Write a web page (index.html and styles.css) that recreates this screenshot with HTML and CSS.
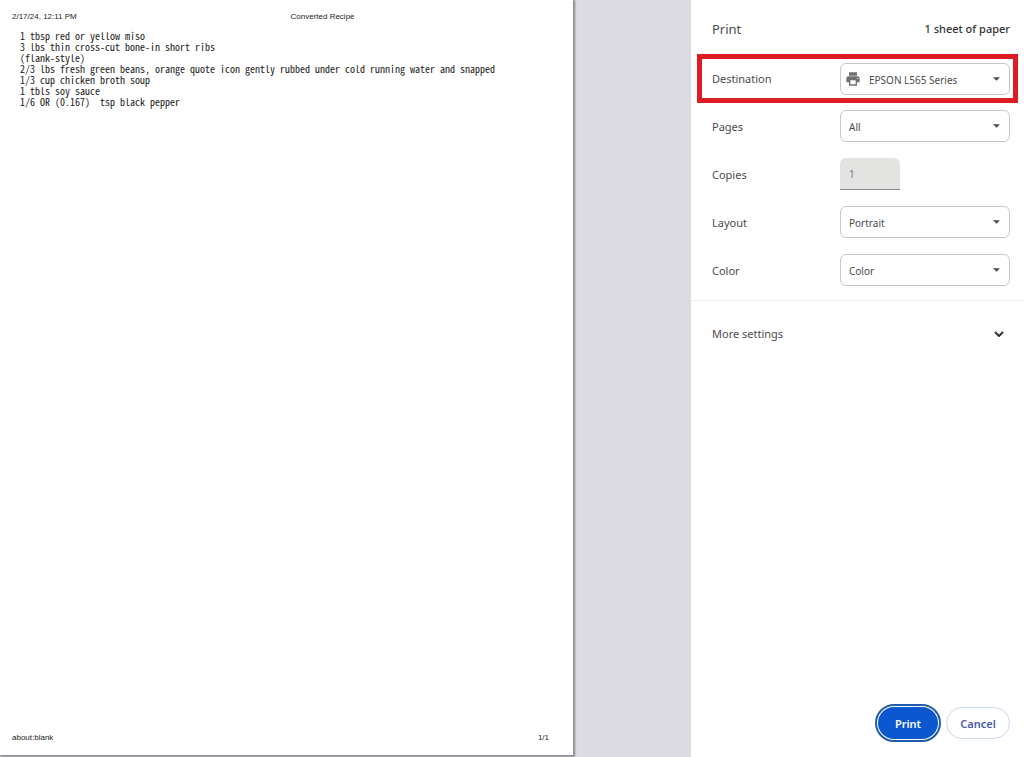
FILE: index.html
```html
<!DOCTYPE html>
<html lang="en">
<head>
<meta charset="utf-8">
<title>Print</title>
<link rel="stylesheet" href="styles.css">
</head>
<body>
<div class="dialog">
  <main class="preview">
    <article class="sheet">
      <header class="sheet-bar">
        <span class="sheet-date">2/17/24, 12:11 PM</span>
        <span class="sheet-title">Converted Recipe</span>
      </header>
      <pre class="recipe">1 tbsp red or yellow miso
3 lbs thin cross-cut bone-in short ribs
(flank-style)
2/3 lbs fresh green beans, orange quote icon gently rubbed under cold running water and snapped
1/3 cup chicken broth soup
1 tbls soy sauce
1/6 OR (0.167)  tsp black pepper</pre>
      <footer class="sheet-bar sheet-foot">
        <span>about:blank</span>
        <span>1/1</span>
      </footer>
    </article>
  </main>
  <form class="panel">
    <header class="panel-head">
      <h1 class="panel-title">Print</h1>
      <span class="sheet-count">1 sheet of paper</span>
    </header>
    <div class="row row-marked">
      <label class="label" for="destination">Destination</label>
      <div class="field">
        <svg class="printer" viewBox="0 0 24 24" aria-hidden="true"><path fill="#6f7073" d="M18 2H6v5h12V2zM19 8H5c-1.660 0-3 1.340-3 3v6h4v5h12v-5h4v-6c0-1.660-1.340-3-3-3zm-3 12H8v-6h8v6zm3-8c-.55 0-1-.45-1-1s.45-1 1-1 1 .45 1 1-.45 1-1 1z"/></svg>
        <select class="select select-icon" id="destination"><option>EPSON L565 Series</option></select>
        <svg class="arrow" viewBox="0 0 8 4" aria-hidden="true"><path fill="#4a4b4e" d="M0 0h8L4 4z"/></svg>
      </div>
    </div>
    <div class="row">
      <label class="label" for="pages">Pages</label>
      <div class="field">
        <select class="select" id="pages"><option>All</option></select>
        <svg class="arrow" viewBox="0 0 8 4" aria-hidden="true"><path fill="#4a4b4e" d="M0 0h8L4 4z"/></svg>
      </div>
    </div>
    <div class="row">
      <label class="label" for="copies">Copies</label>
      <input class="copies" id="copies" type="text" inputmode="numeric" value="1">
    </div>
    <div class="row">
      <label class="label" for="layout">Layout</label>
      <div class="field">
        <select class="select" id="layout"><option>Portrait</option></select>
        <svg class="arrow" viewBox="0 0 8 4" aria-hidden="true"><path fill="#4a4b4e" d="M0 0h8L4 4z"/></svg>
      </div>
    </div>
    <div class="row">
      <label class="label" for="color">Color</label>
      <div class="field">
        <select class="select" id="color"><option>Color</option></select>
        <svg class="arrow" viewBox="0 0 8 4" aria-hidden="true"><path fill="#4a4b4e" d="M0 0h8L4 4z"/></svg>
      </div>
    </div>
    <button class="more" type="button">
      <span>More settings</span>
      <svg class="chevron" viewBox="0 0 10 6" aria-hidden="true"><path fill="none" stroke="#333" stroke-width="2" d="M1 1l4 4 4-4"/></svg>
    </button>
    <footer class="actions">
      <button class="button button-primary" type="submit">Print</button>
      <button class="button" type="button">Cancel</button>
    </footer>
  </form>
</div>
</body>
</html>
```
FILE: styles.css
```css
* {
  box-sizing: border-box;
}

body {
  margin: 0;
  font-family: "Noto Sans", "Open Sans", sans-serif;
  font-size: 11px;
  color: #4b4b4e;
}

.dialog {
  display: flex;
  min-height: 100vh;
}

.preview {
  flex: 1;
  display: flex;
  padding: 0 118px 2px 0;
  background: #dbdbe1;
}

.sheet {
  flex: 1;
  display: flex;
  flex-direction: column;
  padding: 12px 24px 12px 12px;
  background: #fff;
  box-shadow: 1px 1px 2px 1px #88888b;
}

.sheet-bar {
  display: flex;
  font-family: "Liberation Sans", Arial, sans-serif;
  font-size: 8px;
  line-height: 10px;
  color: #222;
}

.sheet-date {
  flex: 1;
}

.sheet-title {
  flex: 1;
  padding-left: 20px;
}

.sheet-foot {
  justify-content: space-between;
  margin-top: auto;
}

.recipe {
  margin: 8px 0 0 8px;
  font-family: "Noto Sans Mono CJK SC", "DejaVu Sans Mono", monospace;
  font-size: 10px;
  line-height: 11px;
  color: #222;
}

.panel {
  flex: 0 0 333px;
  display: flex;
  flex-direction: column;
  background: #fff;
}

.panel-head {
  display: flex;
  align-items: center;
  justify-content: space-between;
  height: 54px;
  padding: 3px 14px 0 21px;
}

.panel-title {
  margin: 0;
  font-size: 13px;
  font-weight: 400;
}

.sheet-count {
  font-weight: 500;
  color: #333;
}

.row {
  display: grid;
  grid-template-columns: 128px 1fr;
  align-items: center;
  height: 48px;
  padding: 0 14px 0 21px;
}

.row-marked {
  height: 49px;
  margin: 0 6px -1px;
  padding: 0 3px 0 10px;
  border: 5px solid #dd1c26;
}

.field {
  position: relative;
  display: flex;
  align-items: center;
}

.select {
  appearance: none;
  width: 100%;
  height: 32px;
  padding: 2px 28px 0 8px;
  border: 1px solid #c6c7c9;
  border-radius: 6px;
  background: #fff;
  font-family: inherit;
  font-size: 10px;
  color: #4b4b4e;
}

.select-icon {
  padding-left: 28px;
}

.printer {
  position: absolute;
  left: 5px;
  width: 16px;
  height: 16px;
}

.arrow {
  position: absolute;
  right: 10px;
  width: 7px;
  height: 4px;
  pointer-events: none;
}

.copies {
  width: 60px;
  height: 32px;
  padding: 0 9px;
  border: 0;
  border-bottom: 1px solid #8c8c8c;
  border-radius: 6px 6px 0 0;
  background: #e3e3e1;
  font-family: inherit;
  font-size: 10px;
  color: #77777a;
}

.more {
  display: flex;
  align-items: center;
  justify-content: space-between;
  height: 66px;
  margin-top: 6px;
  padding: 0 20px 0 21px;
  border: 0;
  border-top: 1px solid #ededef;
  background: none;
  font-family: inherit;
  font-size: 11px;
  color: #4b4b4e;
}

.chevron {
  width: 10px;
  height: 6px;
}

.actions {
  display: flex;
  justify-content: flex-end;
  gap: 8px;
  margin-top: auto;
  padding: 0 14px 18px;
}

.button {
  width: 64px;
  height: 32px;
  padding: 0;
  border: 1px solid #c9d8ee;
  border-radius: 16px;
  background: #fff;
  font-family: inherit;
  font-size: 11px;
  font-weight: 600;
  color: #4a5caa;
}

.button-primary {
  width: 60px;
  border: 0;
  background: #0b57d0;
  color: #fff;
  outline: 2px solid #1f5ca8;
  outline-offset: 1px;
}
```
